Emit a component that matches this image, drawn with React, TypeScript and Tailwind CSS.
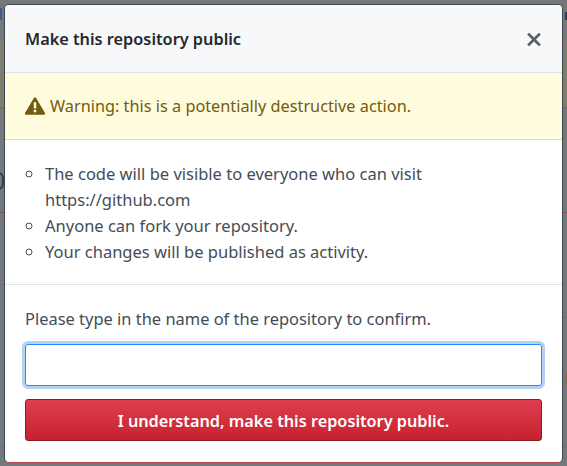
import React from "react";

const notes = [
  "The code will be visible to everyone who can visit https://github.com",
  "Anyone can fork your repository.",
  "Your changes will be published as activity.",
];

// Dimmed page that shows around the edges of the dialog
const Backdrop = () => {
  return (
    <div className="flex h-full flex-col">
      <div className="h-[40px] shrink-0" />
      <div className="h-[68px] shrink-0 border-b border-[#66686a] bg-[#7f7d6e]" />
      <div className="h-[105px] shrink-0 border-b border-[#8a4a50]" />
      <div className="h-[105px] shrink-0 border-b border-[#6c6f72]" />
      <div className="h-[130px] shrink-0 border-b border-[#6c6f72]" />
    </div>
  );
};

const App = () => {
  return (
    <div className="relative h-[466px] w-[567px] overflow-hidden bg-[#75787b] font-['Noto_Sans','Open_Sans',sans-serif] text-[#24292e]">
      <Backdrop />
      <div className="absolute left-0 top-[8px] h-[12px] w-[2px] bg-[#3f5f92]" />
      <div className="absolute left-[-8px] top-[172px] h-[18px] w-[12px] rounded-full border-2 border-[#3a3d40]" />
      <div className="absolute right-0 top-[12px] h-[8px] w-[2px] bg-[#2f3a5c]" />
      <div className="absolute right-0 top-[372px] h-[13px] w-[1px] bg-[#7d6a4c]" />

      {/* Dialog */}
      <div className="absolute left-[4px] top-[4px] h-[459px] w-[559px] overflow-hidden rounded-[5px] border border-[#3c4652] border-b-[#b8434e] bg-white">
        <div className="flex h-[68px] items-center justify-between border-b border-[#dfe2e5] bg-[#f6f8fa] pl-[20px] pr-[20px] pt-[2px]">
          <h3 className="text-[16.3px] font-semibold">Make this repository public</h3>
          <button className="text-[#586069]">
            <svg width="16" height="21" viewBox="0 0 12 16" fill="currentColor">
              <path d="M7.48 8l3.75 3.75-1.48 1.48L6 9.48l-3.75 3.75-1.48-1.48L4.52 8 .77 4.25l1.48-1.48L6 6.52l3.75-3.75 1.48 1.48L7.48 8z" />
            </svg>
          </button>
        </div>

        {/* Warning */}
        <div className="flex h-[67px] items-center gap-[5px] border-b border-[#e5dfb8] bg-[#fffbdd] pl-[20px] text-[16.3px] text-[#735c0f]">
          <svg width="20" height="20" viewBox="0 0 16 16" fill="currentColor">
            <path fillRule="evenodd" d="M8.893 1.5c-.183-.31-.52-.5-.887-.5s-.703.19-.886.5L.138 13.499a.98.98 0 000 1.001c.193.31.53.501.886.501h13.964c.367 0 .704-.19.877-.5a1.03 1.03 0 00.01-1.002L8.893 1.5zM9 13H7v-2h2v2zm0-3H7V5h2v5z" />
          </svg>
          <span>Warning: this is a potentially destructive action.</span>
        </div>

        {/* Consequences */}
        <div className="h-[145px] border-b border-[#e1e4e8] pl-[40px] pr-[100px] pt-[21px] text-[16.5px] leading-[26px] text-[#444d56]">
          <ul className="list-[circle]">
            {notes.map((note) => (
              <li key={note}>{note}</li>
            ))}
          </ul>
        </div>

        {/* Confirm */}
        <div className="flex flex-col px-[20px] pt-[22px]">
          <p className="text-[16.45px] leading-[24px] text-[#444d56]">
            Please type in the name of the repository to confirm.
          </p>
          <input className="mt-[13px] h-[42px] w-[517px] rounded-[3px] border border-[#2188ff] shadow-[0_0_0_3px_rgba(3,102,214,0.3)] outline-none" />
          <button className="mt-[13px] h-[42px] w-[517px] rounded-[3px] border border-[#861d29] bg-gradient-to-b from-[#df3e4f] to-[#c6202d] pt-[2px] text-[16.25px] font-semibold text-white">
            I understand, make this repository public.
          </button>
        </div>
      </div>
    </div>
  );
};

export default App;
